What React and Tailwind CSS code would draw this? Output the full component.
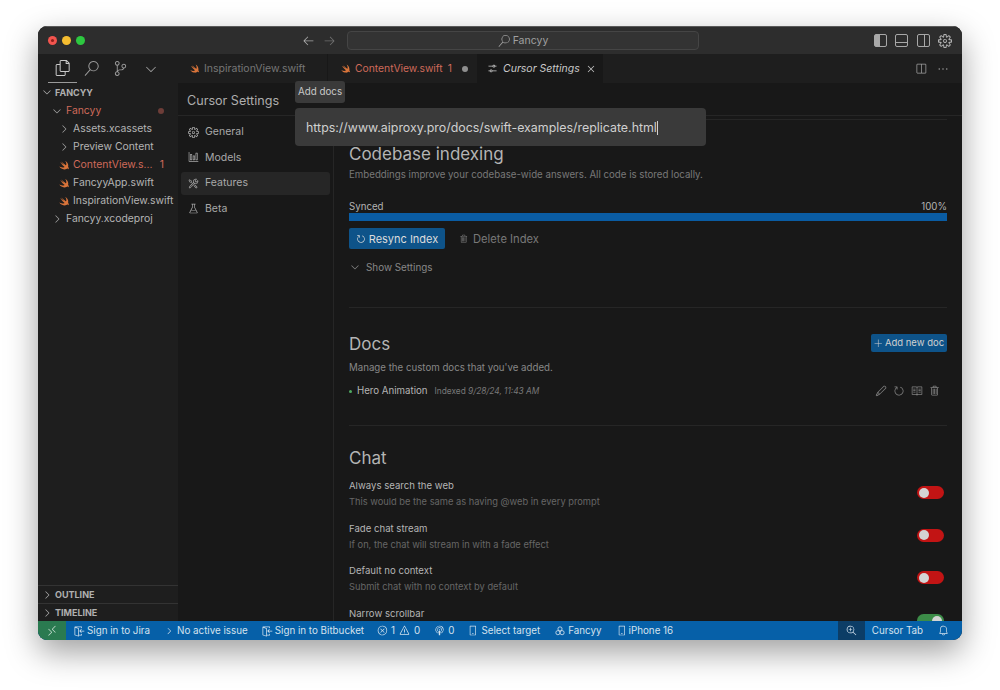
import {
  VscArrowLeft, VscArrowRight, VscSearch, VscFiles, VscSourceControl, VscChevronDown, VscChevronRight, VscSettingsGear,
  VscGraph, VscTools, VscBeaker, VscRefresh, VscTrash, VscAdd, VscEdit, VscBook, VscClose, VscEllipsis, VscSplitHorizontal,
  VscSettings, VscSignIn, VscError, VscWarning, VscBroadcast, VscDeviceMobile, VscZoomIn, VscBell, VscRemote,
} from 'react-icons/vsc'
import { DiSwift } from 'react-icons/di'

const TreeRow = ({ depth, icon, label, tone = 'text-[#b4b4b4]', right }) => (
  <div className={`flex items-center h-[18px] ${tone} ${depth}`}>
    {icon}
    <span className="truncate flex-1 leading-[14px]">{label}</span>
    {right}
  </div>
)

const chevron = <VscChevronRight size={12} className="mr-[3px] text-[#a8a8a8] shrink-0" />
const swift = <DiSwift size={14} className="mr-[2px] -ml-[1px] shrink-0 text-[#d9743a]" />

const NavItem = ({ icon, label, active }) => (
  <div className={`flex items-center h-[23px] mb-[2.600px] pl-[7px] gap-[6px] rounded-[3px] text-[10.500px] text-[#a9a9a9] ${active ? 'bg-[#262626]' : ''}`}>
    {icon}
    {label}
  </div>
)

const ChatToggle = ({ title, sub, on }) => (
  <div className="flex items-center justify-between h-[42.600px]">
    <div>
      <div className="text-[9.600px] leading-[14px] text-[#b4b4b4]">{title}</div>
      <div className="text-[9.300px] leading-[14px] mt-[2px] text-[#666666]">{sub}</div>
    </div>
    <div className={`w-[27px] h-[13px] rounded-full flex items-center px-[2px] mr-[3px] mb-[3px] ${on ? 'bg-[#3c8c48] justify-end' : 'bg-[#c21414]'}`}>
      <div className="w-[10px] h-[10px] rounded-full bg-[#d4d4d4]" />
    </div>
  </div>
)

export default function App() {
  return (
    <div className="w-[1000px] h-[690px] bg-white pt-[26px] pl-[38px] font-['Inter',sans-serif] overflow-hidden">
      <div className="relative w-[924px] h-[614px] rounded-[9px] overflow-hidden flex flex-col bg-[#181818] shadow-[0_12px_32px_rgba(0,0,0,0.38)]">
        {/* title bar */}
        <div className="h-[28px] shrink-0 bg-[#2d2d2d] border-t border-[#5a5a5a] flex items-center text-[#a0a0a0]">
          <div className="flex gap-[5.500px] pl-[10px] w-[264px]">
            <span className="w-[8.500px] h-[8.500px] rounded-full bg-[#f2544e] flex items-center justify-center">
              <span className="w-[3px] h-[3px] rounded-full bg-[#8f1f1a]" />
            </span>
            <span className="w-[8.500px] h-[8.500px] rounded-full bg-[#f5bd30]" />
            <span className="w-[8.500px] h-[8.500px] rounded-full bg-[#2dc840]" />
          </div>
          <VscArrowLeft size={13} className="text-[#a8a8a8]" />
          <VscArrowRight size={13} className="ml-[8px] text-[#6f6f6f]" />
          <div className="ml-[11px] w-[352px] h-[19px] rounded-[4px] bg-[#333333] border border-[#454545] flex items-center justify-center gap-[3px] text-[10.500px] text-[#a0a0a0]">
            <VscSearch size={12} />
            Fancyy
          </div>
          <div className="ml-auto flex items-center gap-[8.500px] pr-[10px]">
            <div className="w-[13px] h-[13px] rounded-[2px] border border-[#a8a8a8] flex">
              <div className="w-[5.500px] bg-[#a8a8a8]" />
            </div>
            <div className="w-[13px] h-[13px] rounded-[2px] border border-[#a8a8a8] flex flex-col justify-end">
              <div className="h-[1px] mb-[3px] bg-[#a8a8a8]" />
            </div>
            <div className="w-[13px] h-[13px] rounded-[2px] border border-[#a8a8a8] flex justify-end">
              <div className="w-[1px] mr-[3.500px] bg-[#a8a8a8]" />
            </div>
            <VscSettingsGear size={14} className="text-[#b0b0b0]" />
          </div>
        </div>

        <div className="flex-1 min-h-0 flex">
          {/* sidebar */}
          <aside className="w-[140px] shrink-0 bg-[#1e1e1e] flex flex-col text-[10.400px]">
            <div className="h-[29px] shrink-0 flex items-center text-[#9a9a9a]">
              <div className="ml-[10px] w-[29px] h-[29px] border-b border-[#9a9a9a] flex items-center justify-center">
                <VscFiles size={16} className="text-[#c8c8c8]" />
              </div>
              <VscSearch size={15} className="ml-[7px]" />
              <VscSourceControl size={15} className="ml-[14px]" />
              <VscChevronDown size={16} className="ml-[15px]" />
            </div>
            <div className="flex-1 leading-none">
              <div className="flex items-center h-[19px] pb-[1px] pl-[3px] text-[9px] font-bold text-[#b0b0b0]">
                <VscChevronDown size={12} className="mr-[2px]" />
                FANCYY
              </div>
              <TreeRow
                depth="pl-[13px] pr-[14px]"
                tone="text-[#cf6a5a]"
                icon={<VscChevronDown size={12} className="mr-[3px] text-[#a8a8a8]" />}
                label="Fancyy"
                right={<span className="w-[6px] h-[6px] rounded-full bg-[#6d3d38]" />}
              />
              <TreeRow depth="pl-[20px]" icon={chevron} label="Assets.xcassets" />
              <TreeRow depth="pl-[20px]" icon={chevron} label="Preview Content" />
              <TreeRow
                depth="pl-[20px] pr-[14px]"
                tone="text-[#cf6a5a]"
                icon={swift}
                label="ContentView.s..."
                right={<span className="ml-[3px]">1</span>}
              />
              <TreeRow depth="pl-[20px]" icon={swift} label="FancyyApp.swift" />
              <TreeRow depth="pl-[20px]" icon={swift} label="InspirationView.swift" />
              <TreeRow depth="pl-[13px]" icon={chevron} label="Fancyy.xcodeproj" />
            </div>
            {['OUTLINE', 'TIMELINE'].map(t => (
              <div key={t} className="h-[18px] border-t border-[#333333] flex items-center pl-[3px] text-[9px] font-bold text-[#b0b0b0]">
                <VscChevronRight size={12} className="mr-[2px]" />
                {t}
              </div>
            ))}
          </aside>

          <div className="flex-1 min-w-0 flex flex-col">
            {/* tabs */}
            <div className="h-[29px] shrink-0 bg-[#1e1e1e] flex text-[10.500px]">
              <div className="w-[150px] flex items-center pl-[10px] gap-[3px] text-[#767676] border-r border-[#181818]">
                <DiSwift size={13} className="text-[#d9743a]" />
                InspirationView.swift
              </div>
              <div className="w-[149px] flex items-center pl-[11px] gap-[3px] text-[#cf6a5a] text-[10.300px]">
                <DiSwift size={13} className="text-[#d9743a]" />
                ContentView.swift
                <span className="ml-[2px]">1</span>
                <span className="ml-[7px] w-[6px] h-[6px] rounded-full bg-[#8f8f8f]" />
              </div>
              <div className="w-[126px] bg-[#181818] flex items-center pl-[10px] italic text-[#c8c8c8] whitespace-nowrap">
                <VscSettings size={11} className="mr-[5px] shrink-0" />
                Cursor Settings
                <VscClose size={12} className="ml-[5px] shrink-0" />
              </div>
              <div className="ml-auto flex items-center gap-[10px] pr-[13px] text-[#a0a0a0]">
                <VscSplitHorizontal size={12} />
                <VscEllipsis size={12} />
              </div>
            </div>

            {/* settings */}
            <div className="flex-1 min-h-0 flex flex-col">
              <div className="h-[33px] shrink-0 pl-[9px] pt-[5px] flex items-center border-b border-[#262626] text-[12.600px] text-[#adadad]">
                Cursor Settings
              </div>
              <div className="flex-1 min-h-0 flex">
                <nav className="w-[156px] shrink-0 border-r border-[#262626] pt-[4.500px] pl-[3px] pr-[3px]">
                  <NavItem icon={<VscSettingsGear size={11} />} label="General" />
                  <NavItem icon={<VscGraph size={11} />} label="Models" />
                  <NavItem icon={<VscTools size={11} />} label="Features" active />
                  <NavItem icon={<VscBeaker size={11} />} label="Beta" />
                </nav>
                <main className="flex-1 min-w-0 overflow-hidden pl-[15px] pr-[15px] pt-[3px]">
                  <div className="border-t border-[#262626] pt-[23px]">
                    <h2 className="text-[17px] leading-[22px] text-[#b4b4b4]">Codebase indexing</h2>
                    <p className="mt-[3px] text-[9.700px] leading-[14px] text-[#787878]">
                      Embeddings improve your codebase-wide answers. All code is stored locally.
                    </p>
                    <div className="mt-[18px] flex justify-between text-[9.700px] leading-[13px] text-[#b4b4b4]">
                      <span>Synced</span>
                      <span>100%</span>
                    </div>
                    <div className="h-[8px] bg-[#0a5ca3]" />
                    <div className="mt-[7px] flex items-center">
                      <button className="h-[21px] w-[96px] pt-[1px] rounded-[2px] bg-[#0e5389] text-[#dcdcdc] text-[11px] flex items-center justify-center gap-[3px]">
                        <VscRefresh size={10} />
                        Resync Index
                      </button>
                      <span className="ml-[14px] pt-[1px] flex items-center gap-[4px] text-[11.200px] text-[#787878]">
                        <VscTrash size={10} />
                        Delete Index
                      </span>
                    </div>
                    <div className="mt-[11px] flex items-center gap-[5px] text-[9.900px] leading-[14px] text-[#878787]">
                      <VscChevronDown size={12} />
                      Show Settings
                    </div>
                  </div>

                  <div className="mt-[33px] border-t border-[#262626] pt-[26px]">
                    <div className="flex items-start justify-between">
                      <h2 className="-mt-[1px] text-[17px] leading-[22px] text-[#b4b4b4]">Docs</h2>
                      <button className="h-[18px] w-[76px] rounded-[2px] bg-[#0e5389] text-[#d0d0d0] text-[9.500px] flex items-center justify-center gap-[2px]">
                        <VscAdd size={9} />
                        Add new doc
                      </button>
                    </div>
                    <p className="mt-[6px] text-[9.700px] leading-[14px] text-[#878787]">Manage the custom docs that you've added.</p>
                    <div className="mt-[9px] flex items-center h-[14px]">
                      <span className="w-[3px] h-[3px] rounded-full bg-[#4faa62]" />
                      <span className="ml-[5px] text-[9.700px] text-[#b4b4b4]">Hero Animation</span>
                      <span className="ml-[7px] text-[8.300px] text-[#787878]">
                        Indexed <em>9/28/24, 11:43 AM</em>
                      </span>
                      <span className="ml-auto flex items-center gap-[6px] text-[#808080]">
                        <VscEdit size={12} />
                        <VscRefresh size={12} />
                        <VscBook size={12} />
                        <VscTrash size={12} className="mr-[6px]" />
                      </span>
                    </div>
                  </div>

                  <div className="mt-[27px] border-t border-[#262626] pt-[21px]">
                    <h2 className="text-[17px] leading-[22px] text-[#b4b4b4]">Chat</h2>
                    <div className="mt-[4px]">
                      <ChatToggle title="Always search the web" sub="This would be the same as having @web in every prompt" />
                      <ChatToggle title="Fade chat stream" sub="If on, the chat will stream in with a fade effect" />
                      <ChatToggle title="Default no context" sub="Submit chat with no context by default" />
                      <ChatToggle title="Narrow scrollbar" sub="Use a narrower scrollbar in the chat" on />
                    </div>
                  </div>
                </main>
              </div>
            </div>
          </div>
        </div>

        {/* status bar */}
        <footer className="h-[19px] shrink-0 bg-[#0660a8] flex items-center text-[9.800px] leading-[13px] text-[#d4e2ee] whitespace-nowrap">
          <div className="w-[28px] h-full bg-[#2a7a50] flex items-center justify-center text-[#cfe3d6]">
            <VscRemote size={12} />
          </div>
          <VscSignIn size={12} className="ml-[7px] shrink-0" />
          <span className="ml-[2px]">Sign in to Jira</span>
          <VscChevronRight size={10} className="ml-[14px] shrink-0" />
          <span className="ml-[3px]">No active issue</span>
          <VscSignIn size={12} className="ml-[13px] shrink-0" />
          <span className="ml-[2px]">Sign in to Bitbucket</span>
          <VscError size={11} className="ml-[13px] shrink-0" />
          <span className="ml-[3px]">1</span>
          <VscWarning size={11} className="ml-[4px] shrink-0" />
          <span className="ml-[4px]">0</span>
          <VscBroadcast size={11} className="ml-[14px] shrink-0" />
          <span className="ml-[3px]">0</span>
          <VscDeviceMobile size={11} className="ml-[13px] shrink-0" />
          <span className="ml-[3px]">Select target</span>
          <svg viewBox="0 0 12 12" className="w-[10px] h-[10px] ml-[15px] shrink-0" fill="none" stroke="currentColor" strokeWidth="1">
            <circle cx="6" cy="3.500" r="2.500" />
            <circle cx="3.500" cy="8" r="2.500" />
            <circle cx="8.500" cy="8" r="2.500" />
          </svg>
          <span className="ml-[3px]">Fancyy</span>
          <VscDeviceMobile size={11} className="ml-[14px] shrink-0" />
          <span className="ml-[2px]">iPhone 16</span>
          <div className="ml-auto w-[27px] h-full bg-[#0c3d66] flex items-center justify-center">
            <VscZoomIn size={11} />
          </div>
          <span className="ml-[7px]">Cursor Tab</span>
          <VscBell size={11} className="ml-[15px] mr-[13px]" />
        </footer>

        {/* add docs popup */}
        <div className="absolute left-[257px] top-[55px] h-[22px] w-[50px] rounded-[3px] bg-[#3a3a3a] flex items-center justify-center text-[9.800px] text-[#c8c8c8]">
          Add docs
        </div>
        <div className="absolute left-[257px] top-[82px] h-[38px] w-[411px] rounded-[4px] bg-[#3a3a3a] flex items-center pl-[11px] pt-[2px] text-[12.400px] text-[#d0d0d0]">
          https://www.aiproxy.pro/docs/swift-examples/replicate.html
          <span className="w-px h-[14px] bg-[#d0d0d0]" />
        </div>
      </div>
    </div>
  )
}
